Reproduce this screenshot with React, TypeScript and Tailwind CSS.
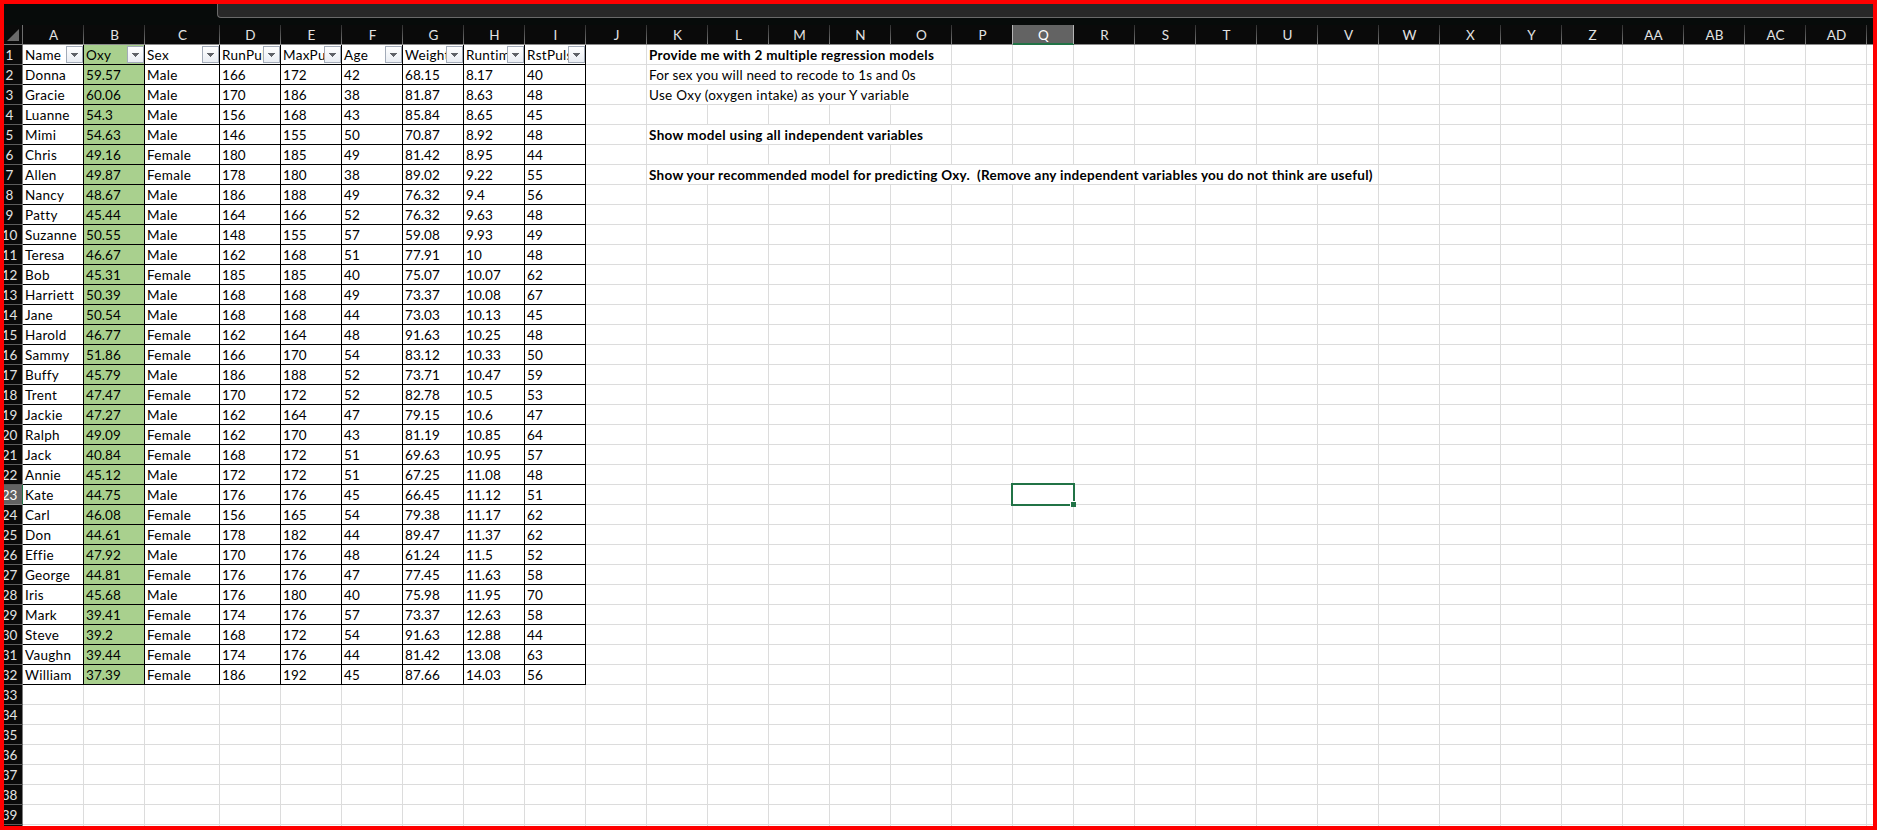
const COLUMNS = [
  "A", "B", "C", "D", "E", "F", "G", "H", "I", "J", "K", "L", "M", "N", "O", "P",
  "Q", "R", "S", "T", "U", "V", "W", "X", "Y", "Z", "AA", "AB", "AC", "AD", "",
];
const HEADERS = ["Name", "Oxy", "Sex", "RunPulse", "MaxPulse", "Age", "Weight", "Runtime", "RstPulse"];

const DATA = `Donna 59.57 Male 166 172 42 68.15 8.17 40
Gracie 60.06 Male 170 186 38 81.87 8.63 48
Luanne 54.3 Male 156 168 43 85.84 8.65 45
Mimi 54.63 Male 146 155 50 70.87 8.92 48
Chris 49.16 Female 180 185 49 81.42 8.95 44
Allen 49.87 Female 178 180 38 89.02 9.22 55
Nancy 48.67 Male 186 188 49 76.32 9.4 56
Patty 45.44 Male 164 166 52 76.32 9.63 48
Suzanne 50.55 Male 148 155 57 59.08 9.93 49
Teresa 46.67 Male 162 168 51 77.91 10 48
Bob 45.31 Female 185 185 40 75.07 10.07 62
Harriett 50.39 Male 168 168 49 73.37 10.08 67
Jane 50.54 Male 168 168 44 73.03 10.13 45
Harold 46.77 Female 162 164 48 91.63 10.25 48
Sammy 51.86 Female 166 170 54 83.12 10.33 50
Buffy 45.79 Male 186 188 52 73.71 10.47 59
Trent 47.47 Female 170 172 52 82.78 10.5 53
Jackie 47.27 Male 162 164 47 79.15 10.6 47
Ralph 49.09 Female 162 170 43 81.19 10.85 64
Jack 40.84 Female 168 172 51 69.63 10.95 57
Annie 45.12 Male 172 172 51 67.25 11.08 48
Kate 44.75 Male 176 176 45 66.45 11.12 51
Carl 46.08 Female 156 165 54 79.38 11.17 62
Don 44.61 Female 178 182 44 89.47 11.37 62
Effie 47.92 Male 170 176 48 61.24 11.5 52
George 44.81 Female 176 176 47 77.45 11.63 58
Iris 45.68 Male 176 180 40 75.98 11.95 70
Mark 39.41 Female 174 176 57 73.37 12.63 58
Steve 39.2 Female 168 172 54 91.63 12.88 44
Vaughn 39.44 Female 174 176 44 81.42 13.08 63
William 37.39 Female 186 192 45 87.66 14.03 56`
  .split("\n")
  .map((line) => line.split(" "));

type Note = { text: string; span: number; style: string };

const NOTES: Record<number, Note> = {
  1: { text: "Provide me with 2 multiple regression models", span: 5, style: "w-[305px] font-bold tracking-[0.28px]" },
  2: { text: "For sex you will need to recode to 1s and 0s", span: 5, style: "w-[305px] tracking-[0.18px]" },
  3: { text: "Use Oxy (oxygen intake) as your Y variable", span: 5, style: "w-[305px] tracking-[0.3px]" },
  5: { text: "Show model using all independent variables", span: 5, style: "w-[305px] font-bold tracking-[0.32px]" },
  7: {
    text: "Show your recommended model for predicting Oxy.  (Remove any independent variables you do not think are useful)",
    span: 12,
    style: "w-[732px] font-bold tracking-[0.27px]",
  },
};

const colWidth = (index: number) => (index === 2 ? "w-[75px]" : "w-[61px]");

function FilterButton() {
  return (
    <span className="absolute right-0 top-px flex size-[17px] items-center justify-center border border-[#a3abb8] bg-linear-to-b from-white to-[#e9edf3]">
      <svg width="7" height="4" viewBox="0 0 7 4" shapeRendering="crispEdges">
        <path d="M0 0H7V1H6V2H5V3H4V4H3V3H2V2H1V1H0Z" fill="#5f6268" />
      </svg>
    </span>
  );
}

function ColumnHeaders() {
  return (
    <div className="flex h-5 shrink-0 bg-[#0a0a0a]">
      <div className="relative h-5 w-[19px] shrink-0 border-b border-[#7a7a7a]">
        <svg className="absolute left-[3px] top-1" width="12" height="12" viewBox="0 0 12 12">
          <path d="M12 0V12H0Z" fill="#6a6a6a" />
        </svg>
        <span className="absolute right-0 top-0 h-[19px] w-px bg-[#6e6e6e]" />
      </div>
      {COLUMNS.map((name, i) => {
        const active = name === "Q";
        return (
          <div
            key={i}
            className={`relative flex h-5 shrink-0 justify-center text-[13.5px] leading-[21px] ${colWidth(i)} ${
              active
                ? "border-b-2 border-[#217346] bg-[#636363] text-white"
                : "border-b border-b-[#8a8a8a] text-[#e2e2e2]"
            }`}
          >
            {name}
            <span
              className={`absolute right-0 top-0 h-[19px] w-px ${
                active || name === "P" ? "bg-[#b5b5b5]" : "bg-linear-to-b from-[#303030] to-[#7c7c7c]"
              }`}
            />
          </div>
        );
      })}
    </div>
  );
}

function Cell({ row, col }: { row: number; col: number }) {
  const inTable = row <= 32 && col <= 8;
  if (!inTable) {
    const selected = row === 23 && COLUMNS[col] === "Q";
    return (
      <div className={`relative h-5 shrink-0 border-b border-r border-[#dcdcdc] ${colWidth(col)}`}>
        {selected && (
          <div className="absolute -left-0.5 -top-0.5 z-10 h-[23px] w-16 border-2 border-[#217346]">
            <span className="absolute -bottom-[3px] -right-[3px] size-[6px] border-l border-t border-white bg-[#217346]" />
          </div>
        )}
      </div>
    );
  }
  const text = row === 1 ? HEADERS[col] : DATA[row - 2][col];
  const isLabel = row === 1 || col === 0 || col === 2;
  return (
    <div
      className={`relative h-5 shrink-0 overflow-hidden whitespace-nowrap border-b border-r border-black pl-[2px] ${colWidth(
        col,
      )} ${col === 1 ? "bg-[#a9d08e]" : ""} ${isLabel ? "tracking-[0.3px]" : "tracking-[0.05px]"}`}
    >
      {text}
      {row === 1 && <FilterButton />}
    </div>
  );
}

function Row({ row }: { row: number }) {
  const active = row === 23;
  const note = NOTES[row];
  return (
    <div className="flex h-5 shrink-0">
      <div
        className={`flex h-5 w-[19px] shrink-0 justify-center overflow-hidden border-b border-r pr-[7px] ${
          active
            ? "border-b-[#8a8a8a] border-r-[#217346] bg-[#636363] text-white"
            : "border-b-[#5c5c5c] border-r-[#7c7c7c] bg-[#0a0a0a] text-[#e2e2e2]"
        }`}
      >
        {row}
      </div>
      {COLUMNS.map((_, col) => {
        if (note && col === 10) {
          return (
            <div
              key={col}
              className={`h-5 shrink-0 whitespace-pre border-b border-r border-[#dcdcdc] pl-[2px] ${note.style}`}
            >
              {note.text}
            </div>
          );
        }
        if (note && col > 10 && col < 10 + note.span) return null;
        return <Cell key={col} row={row} col={col} />;
      })}
    </div>
  );
}

export default function App() {
  return (
    <div className="flex h-[830px] w-[1877px] flex-col overflow-hidden border-4 border-[#ff0000] bg-white font-['Lato',sans-serif] text-[13.5px] leading-[21px] text-black">
      <div className="flex h-[21px] shrink-0 bg-[#070b0a] pl-[213px]">
        <div className="h-[14px] flex-1 rounded-bl-[4px] border-b border-l border-[#6a6a6a] bg-[#282828]" />
      </div>
      <ColumnHeaders />
      {Array.from({ length: 40 }, (_, i) => (
        <Row key={i} row={i + 1} />
      ))}
    </div>
  );
}
